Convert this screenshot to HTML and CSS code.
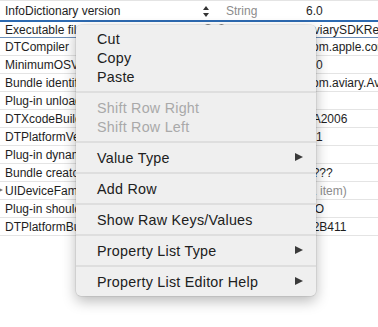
FILE: index.html
```html
<!DOCTYPE html>
<html lang="en">
<head>
  <meta charset="UTF-8">
  <title>plist editor menu</title>
  <link rel="stylesheet" href="styles.css">
</head>
<body>
  <div class="plist">
    <div class="row first">
      <span class="key">InfoDictionary version</span>
      <span class="ctrl">
        <svg class="stepper" width="6" height="11" viewBox="0 0 6 11"><path d="M3 0 L6 4 L0 4 Z M0 7 L6 7 L3 11 Z" fill="#333"/></svg>
      </span>
      <span class="type">String</span>
      <span class="value">6.0</span>
    </div>
    <div class="row focused">
      <span class="key">Executable file</span>
      <span class="ctrl"><span class="round"></span><span class="round"></span></span>
      <span class="type">String</span>
      <span class="value">AviarySDKResources</span>
    </div>
    <div class="row"><span class="key">DTCompiler</span><span class="ctrl"></span><span class="type">String</span><span class="value">com.apple.compilers.llvm.clang.1_0</span></div>
    <div class="row"><span class="key">MinimumOSVersion</span><span class="ctrl"></span><span class="type">String</span><span class="value">8.0</span></div>
    <div class="row"><span class="key">Bundle identifier</span><span class="ctrl"></span><span class="type">String</span><span class="value">com.aviary.AviarySDKResources</span></div>
    <div class="row"><span class="key">Plug-in unloading</span><span class="ctrl"></span><span class="type">Boolean</span><span class="value"></span></div>
    <div class="row"><span class="key">DTXcodeBuild</span><span class="ctrl"></span><span class="type">String</span><span class="value">6A2006</span></div>
    <div class="row"><span class="key">DTPlatformVersion</span><span class="ctrl"></span><span class="type">String</span><span class="value">8.1</span></div>
    <div class="row"><span class="key">Plug-in dynamic</span><span class="ctrl"></span><span class="type">Boolean</span><span class="value"></span></div>
    <div class="row"><span class="key">Bundle creator</span><span class="ctrl"></span><span class="type">String</span><span class="value">????</span></div>
    <div class="row has-children"><span class="key">UIDeviceFamily</span><span class="ctrl"></span><span class="type">Array</span><span class="value muted">(1 item)</span></div>
    <div class="row"><span class="key">Plug-in should</span><span class="ctrl"></span><span class="type">Boolean</span><span class="value">NO</span></div>
    <div class="row"><span class="key">DTPlatformBuild</span><span class="ctrl"></span><span class="type">String</span><span class="value">12B411</span></div>
  </div>

  <div class="menu">
    <div class="item">Cut</div>
    <div class="item">Copy</div>
    <div class="item">Paste</div>
    <div class="sep"></div>
    <div class="item disabled">Shift Row Right</div>
    <div class="item disabled">Shift Row Left</div>
    <div class="sep"></div>
    <div class="item sub">Value Type</div>
    <div class="sep"></div>
    <div class="item">Add Row</div>
    <div class="sep"></div>
    <div class="item">Show Raw Keys/Values</div>
    <div class="sep"></div>
    <div class="item sub">Property List Type</div>
    <div class="sep"></div>
    <div class="item sub">Property List Editor Help</div>
  </div>
</body>
</html>
```

FILE: styles.css
```css
body {
  margin: 0;
  background: #fff;
  font-family: 'Liberation Sans', Arial, sans-serif;
  color: #1e1e1e;
  overflow: hidden;
}
.plist { border-top: 1px solid #e4e4e4; }
.row {
  display: grid;
  grid-template-columns: 200px 26px 80px 1fr;
  align-items: center;
  height: 18px;
  box-sizing: border-box;
  border-bottom: 1px solid #e4e4e4;
  font-size: 12px;
  white-space: nowrap;
  position: relative;
}
.row.first { height: 19px; border-bottom: 0; }
.row.focused {
  border-top: 2px solid #2d6ab1;
  border-bottom: 1px solid #6d8fb8;
}
.key { padding-left: 5px; overflow: hidden; }
.ctrl { display: flex; align-items: center; gap: 4px; padding-left: 3px; }
.stepper { display: block; margin-top: 1px; }
.round { width: 9px; height: 9px; border: 1px solid #8a8a8a; border-radius: 50%; }
.type { color: #8c8c8c; }
.value { overflow: hidden; }
.value.muted { color: #8c8c8c; }
.has-children::before {
  content: "";
  position: absolute;
  left: -3px; top: 5px;
  border-left: 6px solid #777;
  border-top: 3px solid transparent;
  border-bottom: 3px solid transparent;
}

.menu {
  position: absolute;
  left: 76px; top: 25px;
  width: 240px;
  box-sizing: border-box;
  padding: 4px 0 5px;
  background: #efefef;
  border-radius: 5px;
  box-shadow: 0 0 0 0.5px rgba(0,0,0,0.12), 0 5px 14px rgba(0,0,0,0.28);
  font-size: 14.3px;
  letter-spacing: 0.25px;
}
.item {
  position: relative;
  height: 19px;
  line-height: 20px;
  padding-left: 21px;
  color: #202020;
}
.item.disabled { color: #a9a9a9; }
.item.sub::after {
  content: "";
  position: absolute;
  left: 219px; top: 5px;
  border-left: 8px solid #3a3a3a;
  border-top: 4.5px solid transparent;
  border-bottom: 4.5px solid transparent;
}
.sep {
  height: 2px;
  margin: 5px 0;
  background: #dedede;
}
```
